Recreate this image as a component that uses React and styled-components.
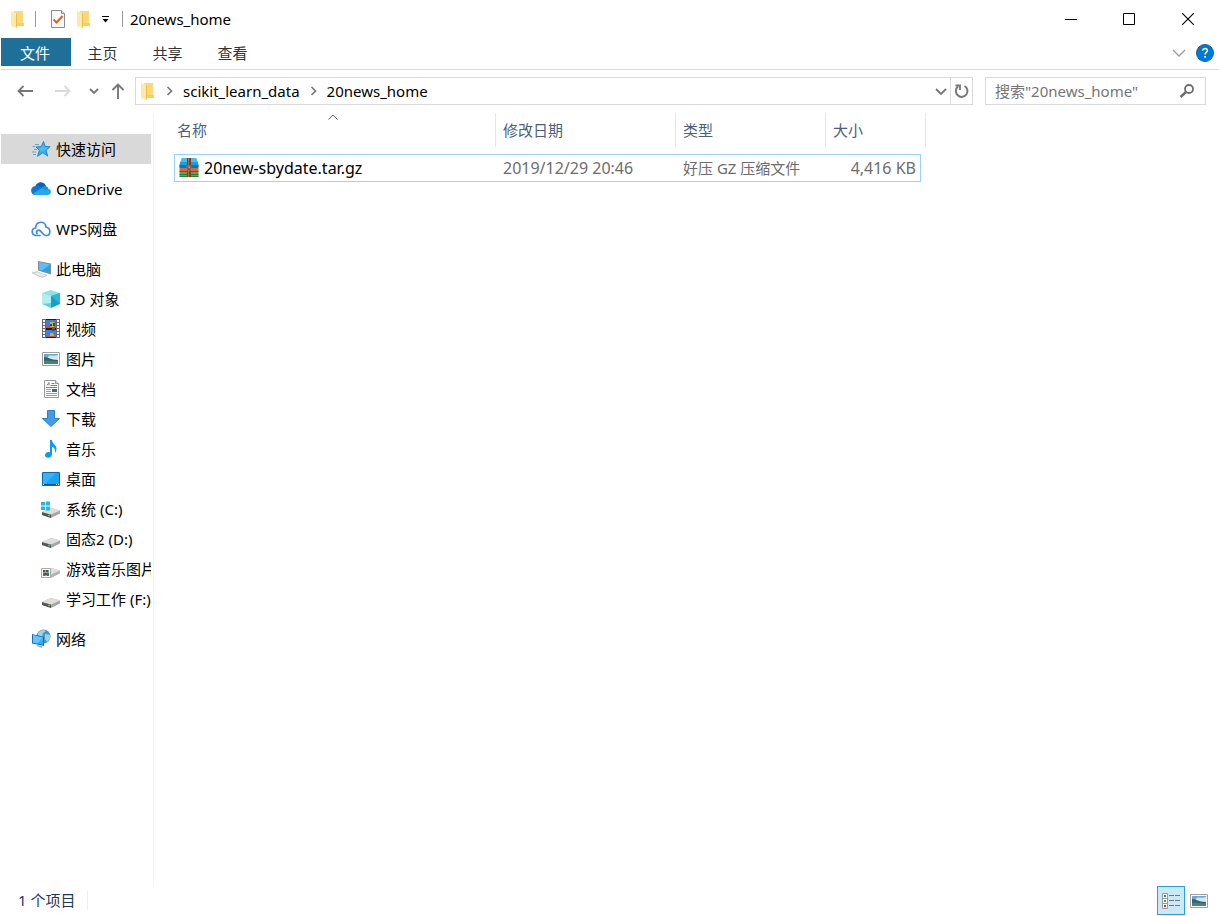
import React from "react";
import styled, { createGlobalStyle } from "styled-components";

const GlobalStyle = createGlobalStyle`
  *, *::before, *::after { box-sizing: border-box; }
  body {
    margin: 0;
    background: #fff;
    color: #000;
    font-family: "Noto Sans", "Noto Sans CJK SC", sans-serif;
    font-size: 15px;
    line-height: 20px;
  }
  button, input { font: inherit; }
  svg { display: block; flex: none; }
`;

const Window = styled.div`
  min-height: 100vh;
  padding-left: 1px;
  display: flex;
  flex-direction: column;
`;

const IconButton = styled.button`
  display: flex;
  align-items: center;
  justify-content: center;
  flex: none;
  width: ${(p) => p.$width}px;
  height: ${(p) => p.$height || 26}px;
  padding: 0;
  border: 0;
  background: none;
`;

const TitleBar = styled.header`
  display: flex;
  align-items: center;
  height: 38px;
  padding: 0 1px 0 8px;
`;

const Separator = styled.span`
  flex: none;
  width: 1px;
  height: 16px;
  margin: 0 ${(p) => p.$right || 0}px 0 ${(p) => p.$left || 0}px;
  background: #9a9a9a;
`;

const Title = styled.h1`
  flex: 1;
  margin: 0;
  font-size: 15px;
  font-weight: 400;
`;

const Ribbon = styled.nav`
  display: flex;
  height: 32px;
  border-bottom: 1px solid #dadbdc;
`;

const Tab = styled.button`
  width: ${(p) => (p.$file ? 70 : 65)}px;
  height: 28px;
  padding: 0 2px 0 0;
  border: 0;
  background: ${(p) => (p.$file ? "#1e7099" : "none")};
  color: ${(p) => (p.$file ? "#fff" : "#333")};
  line-height: 30px;
`;

const RibbonTools = styled.div`
  display: flex;
  align-items: center;
  margin-left: auto;
  padding: 0 5px 2px 0;
`;

const NavBar = styled.div`
  display: flex;
  align-items: center;
  padding: 7px 13px 8px 10px;
`;

const AddressBar = styled.div`
  display: flex;
  flex: 1;
  align-items: center;
  height: 28px;
  padding-left: 3px;
  border: 1px solid #d9d9d9;
`;

const Crumbs = styled.nav`
  display: flex;
  flex: 1;
  align-items: center;
  padding-left: 11px;
  gap: 10px;
`;

const Crumb = styled.a`
  color: #000;
  text-decoration: none;
`;

const RefreshCell = styled.div`
  display: flex;
  align-items: center;
  height: 26px;
  padding-left: 1px;
  border-left: 1px solid #d9d9d9;
`;

const SearchBox = styled.label`
  display: flex;
  align-items: center;
  width: 221px;
  height: 28px;
  margin-left: 12px;
  padding: 0 10px 0 9px;
  border: 1px solid #d9d9d9;
`;

const SearchInput = styled.input`
  flex: 1;
  min-width: 0;
  padding: 0;
  border: 0;
  outline: 0;
  background: none;
  color: #000;
  &::placeholder { color: #757575; opacity: 1; }
`;

const Main = styled.div`
  display: flex;
  flex: 1;
`;

const Sidebar = styled.nav`
  flex: none;
  width: 153px;
  padding: 21px 2px 0 0;
  border-right: 1px solid #f3f3f3;
`;

const TreeGroup = styled.ul`
  margin: 0 0 10px;
  padding: 0;
  list-style: none;
`;

const TreeItem = styled.a`
  display: flex;
  align-items: center;
  gap: 5px;
  height: 30px;
  padding-left: ${(p) => (p.$nested ? 40 : 30)}px;
  overflow: hidden;
  background: ${(p) => (p.$selected ? "#d9d9d9" : "none")};
  color: #000;
  text-decoration: none;
  white-space: nowrap;
`;

const FileArea = styled.main`
  flex: 1;
  padding-left: 20px;
`;

const FileTable = styled.table`
  display: block;
  border-spacing: 0;
  thead, tbody { display: block; }
`;

const HeaderRow = styled.tr`
  display: grid;
  grid-template-columns: 322px 180px 150px 100px;
  width: 752px;
  height: 41px;
  padding-bottom: 7px;
`;

const HeaderCell = styled.th`
  position: relative;
  padding: 7px 0 0 ${(p) => (p.$first ? 3 : 7)}px;
  border-right: 1px solid #e5e5e5;
  color: #4c607a;
  font-weight: 400;
  text-align: left;
`;

const SortMark = styled.span`
  position: absolute;
  top: 1px;
  left: 154px;
`;

const FileRow = styled.tr`
  display: grid;
  grid-template-columns: 321px 180px 150px 94px;
  width: 747px;
  height: 28px;
  border: 1px solid #99d1ff;
`;

const FileCell = styled.td`
  display: flex;
  align-items: center;
  justify-content: ${(p) => (p.$right ? "flex-end" : "flex-start")};
  gap: 5px;
  padding: 0 4px 0 ${(p) => (p.$name ? 4 : 7)}px;
  color: ${(p) => (p.$name ? "#000" : "#6d6d6d")};
  font-size: ${(p) => (p.$latin ? 16 : 15)}px;
`;

const StatusBar = styled.footer`
  display: flex;
  align-items: center;
  justify-content: space-between;
  height: 31px;
  padding: 0 6px 0 17px;
`;

const ItemCount = styled.span`
  padding-right: 12px;
  margin-bottom: 2px;
  border-right: 1px solid #f0f0f0;
  color: #1e395b;
`;

const ViewModes = styled.div`
  display: flex;
  align-items: center;
`;

const ViewButton = styled(IconButton)`
  border: ${(p) => (p.$active ? "1px solid #26a0da" : "0")};
  background: ${(p) => (p.$active ? "#cbe8f6" : "none")};
`;

/* Icons */

const Folder = () => (
  <svg width="16" height="18" viewBox="0 0 16 18">
    <path d="M5 1h9v12h1v3H5z" fill="#f5cf68" />
    <path d="M5 1h9v12H5z" fill="#fbd978" />
    <path d="M2 1l5 2v15l-5-2z" fill="#ffe9a6" />
    <path d="M7 3v15l1-1V4z" fill="#eabb4e" />
  </svg>
);

const Properties = () => (
  <svg width="16" height="20" viewBox="0 0 16 20">
    <path d="M1.500 1.500h10l3 3v14h-13z" fill="#f8f8f8" stroke="#8d8d8d" />
    <path d="M11.500 1.500v3h3" fill="#ddd" stroke="#8d8d8d" />
    <path d="M3.500 10.500l3 3 6-6.500" fill="none" stroke="#f05a1c" strokeWidth="2" />
  </svg>
);

const QuickMenu = () => (
  <svg width="9" height="8" viewBox="0 0 9 8">
    <path d="M1 1.500h7" stroke="#000" />
    <path d="M1.500 4h6L4.500 7.500z" fill="#000" />
  </svg>
);

const Minimize = () => (
  <svg width="12" height="13" viewBox="0 0 12 13"><path d="M0 6.500h12" stroke="#000" /></svg>
);
const Maximize = () => (
  <svg width="12" height="12" viewBox="0 0 12 12"><path d="M.5.500h11v11H.5z" fill="none" stroke="#000" /></svg>
);
const Close = () => (
  <svg width="12" height="12" viewBox="0 0 12 12"><path d="M0 0l12 12M12 0L0 12" stroke="#000" strokeWidth="1.100" /></svg>
);

const Chevron = ({ width = 12, height = 7, color = "#777", weight = 1.8 }) => (
  <svg width={width} height={height} viewBox={`0 0 ${width} ${height}`}>
    <path d={`M1 1L${width / 2} ${height - 1}L${width - 1} 1`} fill="none" stroke={color} strokeWidth={weight} />
  </svg>
);

const SortUp = () => (
  <svg width="10" height="6" viewBox="0 0 10 6"><path d="M.5 5.500L5 1l4.500 4.500" fill="none" stroke="#666" /></svg>
);

const CrumbArrow = () => (
  <svg width="7" height="10" viewBox="0 0 7 10"><path d="M1.500 1l4 4-4 4" fill="none" stroke="#777" strokeWidth="1.700" /></svg>
);

const Help = () => (
  <svg width="18" height="18" viewBox="0 0 18 18">
    <circle cx="9" cy="9" r="8.500" fill="#0078d7" stroke="#1463a5" />
    <path d="M6.700 6.800c0-3 4.900-2.900 4.700 0-.1 1.500-2.300 1.800-2.300 3.600" fill="none" stroke="#fff" strokeWidth="1.500" />
    <path d="M8.300 12h1.700v1.700H8.300z" fill="#fff" />
  </svg>
);

const Arrow = ({ color, turn = 0 }) => (
  <svg width="16" height="14" viewBox="0 0 16 14">
    <path d="M6.500 2L1.500 7l5 5M1.500 7H16" transform={`rotate(${turn} 8 7)`} fill="none" stroke={color} strokeWidth="1.800" />
  </svg>
);

const UpArrow = () => (
  <svg width="14" height="16" viewBox="0 0 14 16">
    <path d="M1.500 7L7 1.500 12.500 7M7 1.500V16" fill="none" stroke="#777" strokeWidth="1.900" />
  </svg>
);

const Refresh = () => (
  <svg width="16" height="16" viewBox="0 0 16 16">
    <path d="M10.500 3a5.800 5.800 0 1 1-6.500.6" fill="none" stroke="#777" strokeWidth="2" />
    <path d="M1.500 2.500h4.500v4.500" fill="none" stroke="#777" strokeWidth="1.800" />
  </svg>
);

const Magnifier = () => (
  <svg width="16" height="14" viewBox="0 0 16 14">
    <circle cx="10" cy="5" r="4" fill="none" stroke="#6d6d6d" strokeWidth="1.800" />
    <path d="M7 8l-5.500 5" stroke="#6d6d6d" strokeWidth="2.400" />
  </svg>
);

const Svg = ({ children }) => (
  <svg width="20" height="20" viewBox="0 0 20 20">{children}</svg>
);

const QuickAccess = () => (
  <Svg>
    <path d="M12.500 2.500l1.700 4.900 4.900.3-4 3.500 1.600 5.800-4.900-3.200-5.300 3.500 1.800-5.900L5 8l5.200-.5z" fill="#36aef0" stroke="#1685ca" strokeWidth=".9" />
    <path d="M12.200 5l1.100 3.500 3.800.2-3.500 2.700L9 12l-1.500-3 3-.3z" fill="#4dbaf4" />
    <path d="M4 5.500h4M1.500 7.500h3M3 10.500h3M1 13h4M2 15.500h3" stroke="#67a9d1" />
  </Svg>
);

const OneDrive = () => (
  <Svg>
    <path d="M4 8C6 2 13 2 15 7l-3 5-8-2z" fill="#0364b8" />
    <path d="M4.500 7C7 6 9 7 11 9l5 5-13 2C-1.500 14-.5 7 4.500 7z" fill="#0f78d4" />
    <path d="M11 9c2-2.500 5.500-2 6 .5 4 .5 4 6 0 6.500H4c-1 0-2-.5-2.500-1z" fill="#28a8ea" />
    <path d="M11 9c2-2.500 5.500-2 6 .5l-2 2z" fill="#1490df" />
  </Svg>
);

const WpsCloud = () => (
  <Svg>
    <path d="M9 16.500H5.500C0 16.500 0 9.500 4.500 9 5 1.500 14.500 1.500 15 8c5 1 5 8 .5 8.500-3 .4-4-2-6-4.500-2.500-2-5 .5-3.500 2.500" fill="none" stroke="#3f87f5" strokeWidth="1.700" strokeLinecap="round" />
  </Svg>
);

const Computer = () => (
  <Svg>
    <path d="M7 2l13 2.500v11L7 11.500z" fill="#7b8d99" />
    <path d="M8 3l11 2.500v8.500L8 10.700z" fill="#2f9ee9" />
    <path d="M8 3l11 2.500-8 6L8 10.700z" fill="#5bbdf7" />
    <path d="M1 14l5-1.500 10 4-5 2z" fill="#d6dadd" stroke="#b4bbc0" strokeWidth=".6" />
    <path d="M4 14l8 3M6 13.500l8 3.300" stroke="#fff" strokeWidth=".6" />
  </Svg>
);

const Cube = () => (
  <Svg>
    <path d="M1 4l9-3 9 3-9 3z" fill="#8ce3ea" />
    <path d="M1 4l9 3v12l-9-4z" fill="#61cfdc" />
    <path d="M19 4l-9 3v12l9-4z" fill="#13a2c6" />
    <path d="M1 4l9 3v7l-9 1z" fill="#b2edf0" />
    <path d="M10 7l9-3v11z" fill="#2bb6d3" />
  </Svg>
);

const Video = () => (
  <Svg>
    <path d="M1 0h18v19H1z" fill="#666" />
    <path d="M5 0h10v19H5z" fill="#101d3c" />
    <path d="M5 1h10v8H5zM5 11h10v7H5z" fill="#3f80dd" />
    <path d="M5 7h4v2H5zM6 17h3l2-1 3 2H6z" fill="#e44426" />
    <path d="M9 3h4l1 3-2 3-3-2zM9 14h3l1 3H9z" fill="#d4b32d" />
    <path d="M9 5h2v2H9zM12 4h2v3h-2zM11 9h3l-1 3h-2z" fill="#35542d" />
    <path d="M11 8h3v2h-3z" fill="#c6352a" />
    <path d="M3 1v18M17 1v18" stroke="#fff" strokeWidth="2" strokeDasharray="2 1" />
  </Svg>
);

const Picture = () => (
  <svg width="20" height="16" viewBox="0 0 20 16">
    <path d="M1.500 1.500h17v13h-17z" fill="#fff" stroke="#a0a0a0" />
    <path d="M3 3h14v10H3z" fill="#68a9df" />
    <path d="M7 6c2-3 5 0 10-2v5H6z" fill="#d1e9f7" />
    <path d="M3 6c5 0 6 3 14 3v2H3z" fill="#386850" />
    <path d="M3 10c5-1 9 1 14 0v3H3z" fill="#487ba8" />
  </svg>
);

const Document = () => (
  <Svg>
    <path d="M3.500 1.500h11l3 3v14h-14z" fill="#fff" stroke="#999" />
    <path d="M14.500 1.500v3h3" fill="#ddd" stroke="#999" />
    <path d="M6 6.500l2-3v3M10.500 4.500h3M9.500 6.500H16M5 8.500h11" fill="none" stroke="#3e92cc" />
    <path d="M5 10.500h5M5 12.500h5M5 14.500h11M5 16.500h11" stroke="#999" />
    <path d="M11 10h5v3h-5z" fill="#426888" />
  </Svg>
);

const Download = () => (
  <Svg><path d="M6.500 1.500h7v8h5L10 17.500 1.500 9.500h5z" fill="#429ce8" stroke="#2783cf" /></Svg>
);

const Music = () => (
  <Svg>
    <path d="M9 1h2c0 4 5 5 4.500 9-.2 2-1 3-1.500 4 .5-4-1-6-3-6v7c0 5-7.500 4.500-7 1 .3-2.500 3-3.500 5-2.500z" fill="#0d9af2" />
  </Svg>
);

const Desktop = () => (
  <svg width="20" height="16" viewBox="0 0 20 16">
    <path d="M1.500 1.500h17v13h-17z" fill="#1ba1f5" stroke="#006eb4" />
    <path d="M2 2h13L4 13H2z" fill="#38b2ff" />
    <path d="M2 13.500h16" stroke="#075485" /><path d="M2 13.500h1M15 13.500h1M17 13.500h1" stroke="#fff" />
  </svg>
);

const DriveBody = ({ led = true }) => (
  <>
    <path d="M1 13l9-4 9 2.500v3L10 19l-9-3z" fill="#a6a6a6" />
    <path d="M1 13l9-4 9 2.500-9 4z" fill="#dedede" />
    <path d="M1 13.300l9 2.400V19l-9-3z" fill="#555" />
    {led && <path d="M7 16.500h2" stroke="#36d940" strokeWidth="1.500" />}
  </>
);

const Drive = () => <Svg><DriveBody /></Svg>;
const SystemDrive = () => (
  <Svg>
    <DriveBody />
    <path d="M0 3h4v3.500H0zM5 2.500h4v4H5zM0 7.500h4V11H0zM5 7.500h4v4H5z" fill="#20b7ed" />
  </Svg>
);
const MediaDrive = () => (
  <Svg>
    <path d="M1 13l9-4 9 2.500v3L10 19l-9-3z" fill="#b5b5b5" />
    <path d="M1 13l9-4 9 2.500-9 4z" fill="#dedede" />
    <path d="M.5 9.500h9v9h-9z" fill="#fff" stroke="#aaa" />
    <path d="M2 11h6v6H2z" fill="#7fa9a2" />
    <path d="M2 11h2v2H2zM5 11h2v2H5zM4 14h2v2H4z" fill="#664b38" />
    <path d="M2 14h2v3H2zM6 14h2v3H6z" fill="#3a7563" />
  </Svg>
);

const Network = () => (
  <Svg>
    <circle cx="12.500" cy="7.500" r="7" fill="#4a95c3" />
    <path d="M7 4c3-4 6-3 8-2l-3 2-1 4-4-2zM14 5l5 1v4l-3 3-2-3z" fill="#9ed1e8" />
    <path d="M1 5l12 3v9L1 14.500z" fill="#1972b5" />
    <path d="M2 6l10 2.700v7L2 13.500z" fill="#39aafa" />
    <path d="M2 6l10 2.700-6 5.700-4-.9z" fill="#66c4fc" />
    <path d="M6 16l5 1v2l-5-1.500z" fill="#a5b8c3" />
  </Svg>
);

const Archive = () => (
  <Svg>
    <path d="M3 0h14l2.500 6v3H.5V6z" fill="#159fe0" />
    <path d="M3 0h14l1.500 4h-17z" fill="#3fc1f3" />
    <path d="M.5 7h19v3H.5z" fill="#0876b5" />
    <path d="M.5 10h19v4H.5z" fill="#ef5a38" />
    <path d="M.5 13h19v1H.5z" fill="#b9362a" />
    <path d="M.5 14h19v4.500H.5z" fill="#4caf4b" />
    <path d="M.5 16h19v1H.5zM.5 18h19v1H.5z" fill="#287e3b" />
    <path d="M8 0h4v19H8z" fill="#7c4127" />
    <path d="M9 0h1v19H9z" fill="#b06a3b" />
    <path d="M8 8h4v4H8z" fill="#5b3b2c" stroke="#948d80" strokeWidth=".8" />
    <path d="M9.500 8.500h1v2h-1z" fill="#eee" />
  </Svg>
);

const DetailsView = () => (
  <svg width="20" height="18" viewBox="0 0 20 18">
    <path d="M1.500 1.500h5v15h-5zM1.500 6.500h5M1.500 11.500h5" fill="#fff" stroke="#999" />
    <path d="M3 3h2v2H3z" fill="#287d9e" /><path d="M3 8h2v2H3z" fill="#a7753c" /><path d="M3 13h2v2H3z" fill="#c62a20" />
    <path d="M8 3.500h5M14 3.500h5M8 8.500h5M14 8.500h5M8 13.500h5M14 13.500h5" stroke="#777" />
  </svg>
);

const tree = [
  [{ label: "快速访问", icon: QuickAccess, selected: true }],
  [{ label: "OneDrive", icon: OneDrive }],
  [{ label: "WPS网盘", icon: WpsCloud }],
  [
    { label: "此电脑", icon: Computer },
    { label: "3D 对象", icon: Cube, nested: true },
    { label: "视频", icon: Video, nested: true },
    { label: "图片", icon: Picture, nested: true },
    { label: "文档", icon: Document, nested: true },
    { label: "下载", icon: Download, nested: true },
    { label: "音乐", icon: Music, nested: true },
    { label: "桌面", icon: Desktop, nested: true },
    { label: "系统 (C:)", icon: SystemDrive, nested: true },
    { label: "固态2 (D:)", icon: Drive, nested: true },
    { label: "游戏音乐图片", icon: MediaDrive, nested: true },
    { label: "学习工作 (F:)", icon: Drive, nested: true },
  ],
  [{ label: "网络", icon: Network }],
];

export default function App() {
  return (
    <>
      <GlobalStyle />
      <Window>
        <TitleBar>
          <Folder />
          <Separator $left={10} $right={14} />
          <IconButton $width={16} aria-label="属性"><Properties /></IconButton>
          <IconButton $width={34} aria-label="新建文件夹"><Folder /></IconButton>
          <IconButton $width={10} aria-label="自定义快速访问工具栏"><QuickMenu /></IconButton>
          <Separator $left={12} $right={7} />
          <Title>20news_home</Title>
          <IconButton $width={58} $height={38} aria-label="最小化"><Minimize /></IconButton>
          <IconButton $width={58} $height={38} aria-label="最大化"><Maximize /></IconButton>
          <IconButton $width={60} $height={38} aria-label="关闭"><Close /></IconButton>
        </TitleBar>

        <Ribbon>
          <Tab $file>文件</Tab>
          <Tab>主页</Tab>
          <Tab>共享</Tab>
          <Tab>查看</Tab>
          <RibbonTools>
            <IconButton $width={34} aria-label="展开功能区"><Chevron width={14} height={8} color="#999" weight={1.3} /></IconButton>
            <IconButton $width={18} aria-label="帮助"><Help /></IconButton>
          </RibbonTools>
        </Ribbon>

        <NavBar>
          <IconButton $width={28} aria-label="后退"><Arrow color="#777" /></IconButton>
          <IconButton $width={48} aria-label="前进"><Arrow color="#dadada" turn={180} /></IconButton>
          <IconButton $width={14} aria-label="最近浏览的位置"><Chevron width={10} height={6} /></IconButton>
          <IconButton $width={34} aria-label="向上"><UpArrow /></IconButton>
          <AddressBar>
            <Folder />
            <Crumbs>
              <CrumbArrow />
              <Crumb href="#data">scikit_learn_data</Crumb>
              <CrumbArrow />
              <Crumb href="#home">20news_home</Crumb>
            </Crumbs>
            <IconButton $width={18} aria-label="以前的位置"><Chevron /></IconButton>
            <RefreshCell>
              <IconButton $width={20} aria-label="刷新"><Refresh /></IconButton>
            </RefreshCell>
          </AddressBar>
          <SearchBox>
            <SearchInput type="text" aria-label="搜索" placeholder={'搜索"20news_home"'} />
            <Magnifier />
          </SearchBox>
        </NavBar>

        <Main>
          <Sidebar>
            {tree.map((group) => (
              <TreeGroup key={group[0].label}>
                {group.map(({ label, icon: Icon, nested, selected }) => (
                  <li key={label}>
                    <TreeItem href="#" $nested={nested} $selected={selected}>
                      <Icon />
                      {label}
                    </TreeItem>
                  </li>
                ))}
              </TreeGroup>
            ))}
          </Sidebar>

          <FileArea>
            <FileTable>
              <thead>
                <HeaderRow>
                  <HeaderCell $first>名称<SortMark><SortUp /></SortMark></HeaderCell>
                  <HeaderCell>修改日期</HeaderCell>
                  <HeaderCell>类型</HeaderCell>
                  <HeaderCell>大小</HeaderCell>
                </HeaderRow>
              </thead>
              <tbody>
                <FileRow>
                  <FileCell $name $latin><Archive />20new-sbydate.tar.gz</FileCell>
                  <FileCell $latin>2019/12/29 20:46</FileCell>
                  <FileCell>好压 GZ 压缩文件</FileCell>
                  <FileCell $right $latin>4,416 KB</FileCell>
                </FileRow>
              </tbody>
            </FileTable>
          </FileArea>
        </Main>

        <StatusBar>
          <ItemCount>1 个项目</ItemCount>
          <ViewModes>
            <ViewButton $width={28} $height={29} $active aria-label="详细信息"><DetailsView /></ViewButton>
            <ViewButton $width={28} $height={29} aria-label="大图标"><Picture /></ViewButton>
          </ViewModes>
        </StatusBar>
      </Window>
    </>
  );
}
